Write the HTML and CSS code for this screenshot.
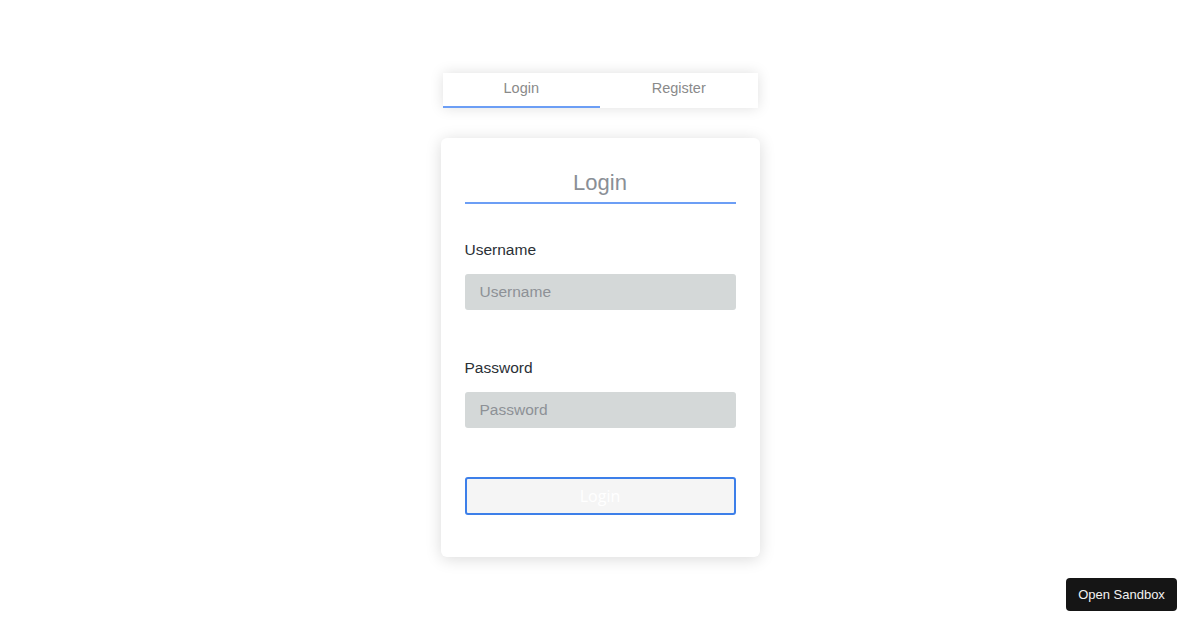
FILE: index.html
```html
<!DOCTYPE html>
<html lang="en">
<head>
<meta charset="utf-8">
<title>Login</title>
<link rel="stylesheet" href="styles.css">
</head>
<body>
<main class="page">
  <nav class="tabs">
    <div class="tab tab-active">Login</div>
    <div class="tab">Register</div>
  </nav>
  <section class="card">
    <h2 class="card-title">Login</h2>
    <form class="form">
      <div class="field">
        <label class="field-label" for="username">Username</label>
        <input class="field-input" id="username" type="text" placeholder="Username">
      </div>
      <div class="field">
        <label class="field-label" for="password">Password</label>
        <input class="field-input" id="password" type="password" placeholder="Password">
      </div>
      <button class="submit" type="button">Login</button>
    </form>
  </section>
</main>
<a class="sandbox-btn">Open Sandbox</a>
</body>
</html>
```
FILE: styles.css
```css
* { box-sizing: border-box; }
html, body {
  margin: 0;
  padding: 0;
  background: #ffffff;
  font-family: "Liberation Sans", Arial, sans-serif;
}
body {
  min-height: 630px;
}
.page {
  display: flex;
  flex-direction: column;
  align-items: center;
  padding-top: 73px;
  padding-bottom: 40px;
}
.tabs {
  display: flex;
  width: 315px;
  height: 35px;
  background: #fff;
  box-shadow: 0 0 14px rgba(0, 0, 0, 0.13);
}
.tab {
  flex: 1;
  display: flex;
  align-items: center;
  justify-content: center;
  font-size: 14.5px;
  color: #8a8a8a;
  padding-bottom: 3px;
  border-bottom: 2px solid transparent;
}
.tab-active {
  border-bottom-color: #6c9ef5;
}
.card {
  margin-top: 30px;
  width: 319px;
  background: #fff;
  border-radius: 6px;
  box-shadow: 0 2px 16px rgba(0, 0, 0, 0.15);
  padding: 32px 24px 42px;
}
.card-title {
  margin: 0 0 37px;
  font-size: 22px;
  line-height: 26px;
  font-weight: normal;
  color: #8a8f96;
  text-align: center;
  padding-bottom: 6px;
  border-bottom: 2px solid #6c9ef5;
}
.form {
  display: flex;
  flex-direction: column;
}
.field {
  display: flex;
  flex-direction: column;
  margin-bottom: 49px;
}
.field-label {
  font-size: 15.5px;
  line-height: 18px;
  color: #2b3036;
  margin-bottom: 15px;
}
.field-input {
  height: 36px;
  border: none;
  border-radius: 3px;
  background: #d4d8d8;
  padding: 0 15px;
  font-family: "Liberation Sans", Arial, sans-serif;
  font-size: 15.5px;
  color: #333;
  outline: none;
}
.field-input::placeholder {
  color: #8d9196;
}
.submit {
  height: 38px;
  border: 2px solid #3d7fe9;
  border-radius: 3px;
  background: #f5f5f5;
  color: #ffffff;
  font-family: "Open Sans", sans-serif;
  font-size: 16px;
  padding: 0;
}
.sandbox-btn {
  position: fixed;
  right: 23px;
  bottom: 19px;
  width: 111px;
  height: 33px;
  display: flex;
  align-items: center;
  justify-content: center;
  background: #151515;
  color: #f2f2f2;
  border-radius: 4px;
  font-family: "Liberation Sans", Arial, sans-serif;
  font-size: 13px;
}
```
